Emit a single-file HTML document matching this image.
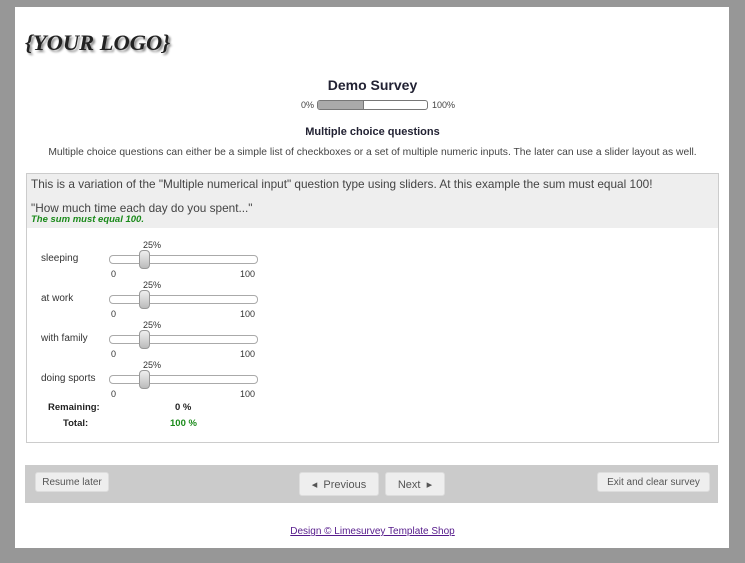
<!DOCTYPE html>
<html><head><style>
body{margin:0;width:745px;height:563px;background:#979797;font-family:"Liberation Sans",sans-serif;position:relative;overflow:hidden}
.a{position:absolute;white-space:nowrap}
#p{position:absolute;left:15px;top:7px;width:714px;height:541px;background:#fff}
.tr{position:absolute;left:109px;width:147px;height:7px;border:1px solid #aaa;border-radius:4px;background:#fff}
.hd{position:absolute;left:139px;width:9px;height:17px;border:1px solid #999;border-radius:4px;background:linear-gradient(#eee,#bbb)}
.lb{font-size:10px;color:#333}
.sm{font-size:9px;color:#333}
.btn{position:absolute;background:#eee;border:1px solid #ddd;border-radius:3px;color:#555;font-size:10px;text-align:center;box-sizing:border-box}
</style></head><body>
<div id="p"></div>
<div class="a" style="left:25px;top:30px;font:italic bold 22.5px 'Liberation Serif',serif;color:#222;text-shadow:2px 2px 2px #888">{YOUR LOGO}</div>
<div class="a" style="left:0;width:745px;text-align:center;top:77px;font-weight:bold;font-size:14px;color:#223">Demo Survey</div>
<div class="a" style="left:301px;top:100px;font-size:9px;color:#444">0%</div>
<div class="a" style="left:317px;top:100px;width:109px;height:8px;border:1px solid #777;border-radius:3px;background:#fff;overflow:hidden"><div style="width:45px;height:8px;background:#aaa;border-right:1px solid #777"></div></div>
<div class="a" style="left:432px;top:100px;font-size:9px;color:#444">100%</div>
<div class="a" style="left:0;width:745px;text-align:center;top:126px;font-weight:bold;font-size:11px;color:#223">Multiple choice questions</div>
<div class="a" style="left:0;width:745px;text-align:center;top:147px;font-size:10.3px;color:#444">Multiple choice questions can either be a simple list of checkboxes or a set of multiple numeric inputs. The later can use a slider layout as well.</div>
<div class="a" style="left:26px;top:173px;width:691px;height:268px;border:1px solid #ccc"></div>
<div class="a" style="left:27px;top:174px;width:691px;height:54px;background:#eee"></div>
<div class="a" style="left:31px;top:177px;font-size:11.8px;color:#444">This is a variation of the "Multiple numerical input" question type using sliders. At this example the sum must equal 100!</div>
<div class="a" style="left:31px;top:201px;font-size:11.8px;color:#444">"How much time each day do you spent..."</div>
<div class="a" style="left:31px;top:214px;font-size:9.5px;font-weight:bold;font-style:italic;color:#1a8a1a">The sum must equal 100.</div>

<div class="a lb" style="left:41px;top:253px">sleeping</div>
<div class="a sm" style="left:143px;top:240px">25%</div>
<div class="tr" style="top:255px"></div><div class="hd" style="top:250px"></div>
<div class="a sm" style="left:111px;top:269px">0</div><div class="a sm" style="left:240px;top:269px">100</div>

<div class="a lb" style="left:41px;top:293px">at work</div>
<div class="a sm" style="left:143px;top:280px">25%</div>
<div class="tr" style="top:295px"></div><div class="hd" style="top:290px"></div>
<div class="a sm" style="left:111px;top:309px">0</div><div class="a sm" style="left:240px;top:309px">100</div>

<div class="a lb" style="left:41px;top:333px">with family</div>
<div class="a sm" style="left:143px;top:320px">25%</div>
<div class="tr" style="top:335px"></div><div class="hd" style="top:330px"></div>
<div class="a sm" style="left:111px;top:349px">0</div><div class="a sm" style="left:240px;top:349px">100</div>

<div class="a lb" style="left:41px;top:373px">doing sports</div>
<div class="a sm" style="left:143px;top:360px">25%</div>
<div class="tr" style="top:375px"></div><div class="hd" style="top:370px"></div>
<div class="a sm" style="left:111px;top:389px">0</div><div class="a sm" style="left:240px;top:389px">100</div>

<div class="a" style="left:48px;top:402px;font-size:9.5px;font-weight:bold;color:#222">Remaining:</div>
<div class="a" style="left:175px;top:402px;font-size:9.5px;font-weight:bold;color:#222">0 %</div>
<div class="a" style="left:63px;top:418px;font-size:9.5px;font-weight:bold;color:#222">Total:</div>
<div class="a" style="left:170px;top:418px;font-size:9.5px;font-weight:bold;color:#1a8a1a">100 %</div>

<div class="a" style="left:25px;top:465px;width:693px;height:38px;background:#cbcbcb"></div>
<div class="btn" style="left:35px;top:472px;width:74px;height:20px;line-height:20px">Resume later</div>
<div class="btn" style="left:299px;top:472px;width:80px;height:24px;line-height:24px;font-size:11px">◂&nbsp; Previous</div>
<div class="btn" style="left:385px;top:472px;width:60px;height:24px;line-height:24px;font-size:11px">Next &nbsp;▸</div>
<div class="btn" style="left:597px;top:472px;width:113px;height:20px;line-height:20px">Exit and clear survey</div>
<div class="a" style="left:0;width:745px;text-align:center;top:526px;font-size:10px;color:#551a8b;text-decoration:underline">Design © Limesurvey Template Shop</div>
</body></html>
